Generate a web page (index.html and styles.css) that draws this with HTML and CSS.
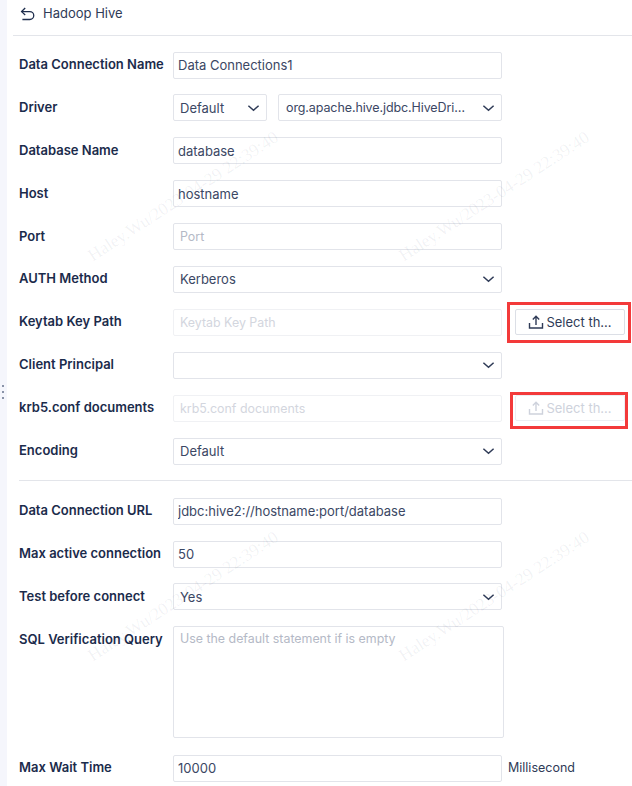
FILE: index.html
```html
<!DOCTYPE html>
<html lang="en">
<head>
    <meta charset="UTF-8">
    <title>Hadoop Hive</title>
    <link rel="stylesheet" href="styles.css">
</head>
<body>
    <div class="side-strip">
        <div class="grip"><i></i><i></i><i></i></div>
    </div>
    <div class="page">
        <div class="page-head">
            <svg class="back-icon" viewBox="0 0 15 14" width="15" height="14" fill="none" stroke="#1f2e4d" stroke-width="1.3">
                <path d="M5.2 1 1.6 4.6l3.6 3.4"/>
                <path d="M1.6 4.6h8.2a3.9 3.9 0 0 1 0 7.9H2.4"/>
            </svg>
            <span>Hadoop Hive</span>
        </div>

        <form class="form">
            <div class="row">
                <label>Data Connection Name</label>
                <input class="field" type="text" value="Data Connections1">
            </div>
            <div class="row">
                <label>Driver</label>
                <div class="pair">
                    <div class="select select-small"><span>Default</span><svg class="chev" viewBox="0 0 14 8" width="13" height="8"><path d="M1.5 1.5 7 6.5l5.5-5"/></svg></div>
                    <div class="select select-driver"><span>org.apache.hive.jdbc.HiveDri…</span><svg class="chev" viewBox="0 0 14 8" width="13" height="8"><path d="M1.5 1.5 7 6.5l5.5-5"/></svg></div>
                </div>
            </div>
            <div class="row">
                <label>Database Name</label>
                <input class="field" type="text" value="database">
            </div>
            <div class="row">
                <label>Host</label>
                <input class="field" type="text" value="hostname">
            </div>
            <div class="row">
                <label>Port</label>
                <input class="field" type="text" placeholder="Port">
            </div>
            <div class="row">
                <label>AUTH Method</label>
                <div class="select"><span>Kerberos</span><svg class="chev" viewBox="0 0 14 8" width="13" height="8"><path d="M1.5 1.5 7 6.5l5.5-5"/></svg></div>
            </div>
            <div class="row">
                <label>Keytab Key Path</label>
                <input class="field" type="text" placeholder="Keytab Key Path" disabled>
                <button type="button" class="upload-btn">
                    <svg viewBox="0 0 16 16" width="16" height="16" fill="none" stroke="currentColor" stroke-width="1.4"><path d="M8 11V2.5M4.8 5.5 8 2.3l3.2 3.2"/><path d="M1.5 9v5h13V9"/></svg>
                    <span>Select th...</span>
                </button>
                <div class="mark mark-one"></div>
            </div>
            <div class="row">
                <label>Client Principal</label>
                <div class="select"><span></span><svg class="chev" viewBox="0 0 14 8" width="13" height="8"><path d="M1.5 1.5 7 6.5l5.5-5"/></svg></div>
            </div>
            <div class="row">
                <label>krb5.conf documents</label>
                <input class="field" type="text" placeholder="krb5.conf documents" disabled>
                <button type="button" class="upload-btn" disabled>
                    <svg viewBox="0 0 16 16" width="16" height="16" fill="none" stroke="currentColor" stroke-width="1.4"><path d="M8 11V2.5M4.8 5.5 8 2.3l3.2 3.2"/><path d="M1.5 9v5h13V9"/></svg>
                    <span>Select th...</span>
                </button>
                <div class="mark mark-two"></div>
            </div>
            <div class="row">
                <label>Encoding</label>
                <div class="select"><span>Default</span><svg class="chev" viewBox="0 0 14 8" width="13" height="8"><path d="M1.5 1.5 7 6.5l5.5-5"/></svg></div>
            </div>

            <hr class="sep">

            <div class="row">
                <label>Data Connection URL</label>
                <input class="field" type="text" value="jdbc:hive2://hostname:port/database">
            </div>
            <div class="row">
                <label>Max active connection</label>
                <input class="field" type="text" value="50">
            </div>
            <div class="row">
                <label>Test before connect</label>
                <div class="select"><span>Yes</span><svg class="chev" viewBox="0 0 14 8" width="13" height="8"><path d="M1.5 1.5 7 6.5l5.5-5"/></svg></div>
            </div>
            <div class="row row-top">
                <label>SQL Verification Query</label>
                <textarea class="area" placeholder="Use the default statement if is empty"></textarea>
            </div>
            <div class="row">
                <label>Max Wait Time</label>
                <input class="field" type="text" value="10000">
                <span class="unit">Millisecond</span>
            </div>
        </form>
    </div>

    <div class="watermarks">
        <span class="wm wm-a">Haley.Wu/2023-04-29 22:39:40</span>
        <span class="wm wm-b">Haley.Wu/2023-04-29 22:39:40</span>
        <span class="wm wm-c">Haley.Wu/2023-04-29 22:39:40</span>
        <span class="wm wm-d">Haley.Wu/2023-04-29 22:39:40</span>
    </div>
</body>
</html>
```

FILE: styles.css
```css
html, body { margin: 0; height: 786px; overflow: hidden; background-color: white; }
body { font-family: Inter, "Noto Sans", sans-serif; font-size: 13px; color: #3b4764; display: flex; }

.side-strip { width: 7px; flex: none; background-color: #f5f6fc; display: flex; align-items: flex-start; }
.grip { display: flex; flex-direction: column; gap: 4px; margin: 385px 0 0 2px; }
.grip i { display: block; width: 2px; height: 2px; background-color: #8a93a8; }

.page { flex: 1; padding-left: 6px; min-width: 0; }
.page-head {
    height: 36px;
    box-sizing: border-box;
    border-bottom: 1px solid #e3e5ea;
    display: flex;
    align-items: flex-start;
    gap: 8px;
    padding: 5px 0 0 7px;
    font-size: 13px;
    line-height: 16px;
    color: #2f3b57;
}
.back-icon { flex: none; margin-top: 2px; }

.form { padding: 15.5px 0 0 6px; }
.row { position: relative; display: flex; align-items: center; height: 27px; margin-bottom: 15.9px; }
.row-top { height: 112px; align-items: flex-start; margin-bottom: 16.5px; }
.row-top label { margin-top: 5px; padding-bottom: 0; }
label { width: 154px; flex: none; font-weight: 600; font-size: 13px; color: #1b2b4b; white-space: nowrap; padding-bottom: 2px; }

.field, .select, .area {
    box-sizing: border-box;
    border: 1px solid #e2e4ea;
    border-radius: 2px;
    background-color: white;
    font-family: inherit;
    font-size: 13px;
    color: #3b4764;
    outline: none;
}
.field { width: 329px; height: 27px; padding: 0 3px 0 4px; }
.field:placeholder-shown { padding-left: 6px; font-size: 12.4px; }
.field::placeholder, .area::placeholder { color: #b4b9c6; opacity: 1; }
.field:disabled { border-color: #f0f1f4; background-color: white; }
.field:disabled::placeholder { color: #d3d6de; }

.select { width: 329px; height: 27px; display: flex; align-items: center; justify-content: space-between; padding: 0 6px 0 6px; line-height: 24px; }
.select span { white-space: nowrap; margin-right: 8px; }
.select-small { width: 94px; flex: none; }
.pair { display: flex; gap: 11px; width: 329px; }
.pair .select-driver { width: 224px; padding-left: 7px; }
.select-driver span { font-size: 12.5px; letter-spacing: -0.1px; margin-right: 0; }
.chev { flex: none; fill: none; stroke: #2f3b57; stroke-width: 1.6; }

.area { width: 331px; height: 112px; padding: 4px 6px; resize: none; display: block; font-size: 12.4px; }

.upload-btn {
    width: 110px;
    height: 26px;
    margin-left: 13px;
    box-sizing: border-box;
    border: 1px solid #dcdfe6;
    border-radius: 2px;
    background-color: white;
    color: #2f3b57;
    font-family: inherit;
    font-size: 13px;
    display: flex;
    align-items: center;
    justify-content: center;
    gap: 2px;
    padding: 0;
}
.upload-btn:disabled { color: #ced2dc; border-color: #eceef2; }
.unit { margin-left: 6px; font-size: 12.5px; color: #2f3b57; padding-bottom: 2px; }

/* red review boxes drawn over the buttons */
.mark { position: absolute; border: 3px solid #f33a3a; box-sizing: border-box; pointer-events: none; }
.mark-one { left: 488px; top: -7px; width: 124px; height: 41px; }
.mark-two { left: 491px; top: -3px; width: 118px; height: 37px; }

.sep { border: none; border-top: 1px solid #e3e5ea; margin: 0 0 16.3px; }

.watermarks { position: absolute; inset: 0; overflow: hidden; pointer-events: none; }
.wm {
    position: absolute;
    font-family: "Liberation Serif", serif;
    font-size: 17.5px;
    line-height: 20px;
    color: rgba(60, 70, 100, 0.07);
    white-space: nowrap;
    transform: rotate(-33deg);
    transform-origin: left bottom;
}
.wm-a { left: 95px; top: 245px; }
.wm-b { left: 406px; top: 245px; }
.wm-c { left: 95px; top: 645px; }
.wm-d { left: 406px; top: 645px; }
```
